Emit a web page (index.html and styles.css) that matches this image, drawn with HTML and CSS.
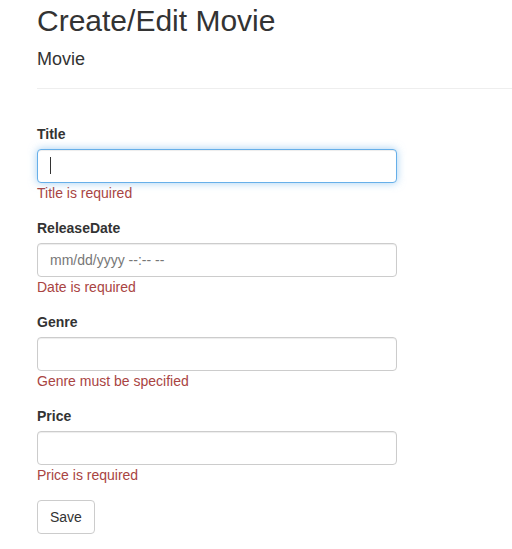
FILE: index.html
```html
<!DOCTYPE html>
<html>
<head>
<meta charset="utf-8">
<link rel="stylesheet" href="styles.css">
</head>
<body>
<div class="page">
  <h2 class="title">Create/Edit Movie</h2>
  <h4 class="subtitle">Movie</h4>
  <hr class="divider">
  <form class="form">
    <div class="form-group">
      <label class="label">Title</label>
      <div class="field">
        <input class="control focused" type="text">
        <span class="caret"></span>
      </div>
      <span class="error">Title is required</span>
    </div>
    <div class="form-group">
      <label class="label">ReleaseDate</label>
      <div class="control date">mm/dd/yyyy --:-- --</div>
      <span class="error">Date is required</span>
    </div>
    <div class="form-group">
      <label class="label">Genre</label>
      <input class="control" type="text">
      <span class="error">Genre must be specified</span>
    </div>
    <div class="form-group">
      <label class="label">Price</label>
      <input class="control" type="text">
      <span class="error">Price is required</span>
    </div>
    <button class="btn" type="button">Save</button>
  </form>
</div>
</body>
</html>
```
FILE: styles.css
```css
* { box-sizing: border-box; }
html, body {
  margin: 0;
  padding: 0;
  background: #fff;
}
body {
  font-family: "Liberation Sans", Arial, sans-serif;
  font-size: 14px;
  line-height: 20px;
  color: #333;
}
.page {
  padding: 4px 0 0 37px;
}
.title {
  margin: 0 0 12px 0;
  font-size: 30px;
  line-height: 33px;
  font-weight: normal;
  color: #333;
}
.subtitle {
  margin: 0;
  font-size: 18px;
  line-height: 20px;
  font-weight: normal;
  color: #333;
}
.divider {
  margin: 19px 0 0 0;
  border: 0;
  border-top: 1px solid #eee;
  height: 0;
}
.form {
  padding-top: 35px;
  display: flex;
  flex-direction: column;
  align-items: flex-start;
}
.form-group {
  display: flex;
  flex-direction: column;
  align-items: flex-start;
  margin-bottom: 15px;
}
.label {
  font-weight: bold;
  line-height: 20px;
  margin-bottom: 5px;
}
.field {
  position: relative;
}
.control {
  display: block;
  width: 360px;
  height: 34px;
  padding: 6px 12px;
  font-family: "Liberation Sans", Arial, sans-serif;
  font-size: 14px;
  line-height: 20px;
  color: #555;
  background: #fff;
  border: 1px solid #ccc;
  border-radius: 4px;
  box-shadow: inset 0 1px 1px rgba(0,0,0,.075);
  margin: 0;
  outline: none;
}
.control.focused {
  border-color: #66afe9;
  box-shadow: inset 0 1px 1px rgba(0,0,0,.075), 0 0 8px rgba(102,175,233,.6);
}
.date {
  color: #777;
}
.caret {
  position: absolute;
  left: 13px;
  top: 8px;
  width: 1px;
  height: 17px;
  background: #333;
}
.error {
  color: #a94442;
  line-height: 20px;
}
.btn {
  display: inline-block;
  height: 34px;
  padding: 6px 12px;
  font-family: "Liberation Sans", Arial, sans-serif;
  font-size: 14px;
  line-height: 20px;
  color: #333;
  background: #fff;
  border: 1px solid #ccc;
  border-radius: 4px;
  margin: 0;
}
```
